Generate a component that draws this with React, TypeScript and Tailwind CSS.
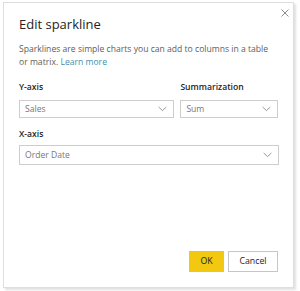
import React from 'react';

const Chevron: React.FC = () => (
  <svg width="9" height="6" viewBox="0 0 9 6" fill="none" className="shrink-0">
    <path d="M0.7 1 L4.5 4.6 L8.3 1" stroke="#8a8a8a" strokeWidth="0.9" />
  </svg>
);

interface SelectBoxProps {
  value: string;
  className?: string;
}

const SelectBox: React.FC<SelectBoxProps> = ({ value, className }) => (
  <div className={`flex items-center justify-between border border-[#cdcdcd] bg-white pl-[5px] pr-[6px] ${className ?? ''}`}>
    <span className="text-[8.6px] text-[#777]">{value}</span>
    <Chevron />
  </div>
);

export default function App() {
  return (
    <div className="h-[291px] w-[300px] bg-white pl-[3px] pt-[2px]" style={{ fontFamily: '"Open Sans", "Noto Sans", sans-serif' }}>
      <div className="relative flex h-[286px] w-[291px] flex-col border border-[#dedede] bg-white px-[15px] shadow-[2px_2px_2px_rgba(0,0,0,0.12)]">
        <button className="absolute right-[1px] top-[3px] flex h-[14px] w-[14px] items-center justify-center">
          <svg width="8" height="8" viewBox="0 0 8 8">
            <path d="M0.5 0.5 L7.5 7.5 M7.5 0.5 L0.5 7.5" stroke="#8c8c8c" strokeWidth="1" />
          </svg>
        </button>

        <h1 className="mt-[13px] text-[13px] leading-[16px] text-[#252423]">Edit sparkline</h1>

        <p className="mt-[11px] text-[8.6px] leading-[13px] text-[#605e5c]">
          Sparklines are simple charts you can add to columns in a table or matrix.{' '}
          <span className="text-[#3e8fb0]">Learn more</span>
        </p>

        <div className="mt-[12px] flex gap-[6px]">
          <div className="flex w-[156px] flex-col">
            <span className="text-[8.6px] font-semibold leading-[13px] text-[#252423]">Y-axis</span>
            <SelectBox value="Sales" className="mt-[6px] h-[18px]" />
          </div>
          <div className="flex w-[98px] flex-col">
            <span className="text-[8.6px] font-semibold leading-[13px] text-[#252423]">Summarization</span>
            <SelectBox value="Sum" className="mt-[6px] h-[18px]" />
          </div>
        </div>

        <div className="mt-[10px] flex w-[260px] flex-col">
          <span className="text-[8.6px] font-semibold leading-[13px] text-[#252423]">X-axis</span>
          <SelectBox value="Order Date" className="mt-[4px] h-[20px]" />
        </div>

        <div className="mt-auto mb-[15px] flex justify-end gap-[4px]">
          <button className="h-[21px] w-[35px] bg-[#f2c811] text-[8.8px] text-[#252423]">OK</button>
          <button className="h-[21px] w-[50px] border border-[#c8c6c4] bg-white text-[8.8px] text-[#252423]">Cancel</button>
        </div>
      </div>
    </div>
  );
}
